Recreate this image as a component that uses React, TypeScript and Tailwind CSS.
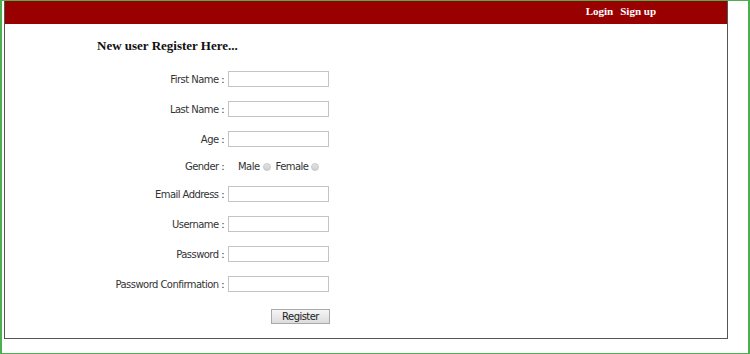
import React from "react";

const labelFont = "font-['DejaVu_Sans','Tahoma',sans-serif] tracking-[-0.55px]";

const Field = ({ label, type = "text" }: { label: string; type?: string }) => (
  <div className="flex h-[30px] items-center">
    <label className="w-[223px] pr-[4px] text-right text-[10px] text-[#333]">
      {label} :
    </label>
    <input
      type={type}
      className="h-[16px] w-[101px] border border-[#c4c4c4] bg-white outline-none"
    />
  </div>
);

const Radio = () => (
  <span className="ml-[3px] inline-block h-[8px] w-[8px] rounded-full border border-[#c8c8c8] bg-gradient-to-b from-[#e4e4e4] to-[#cfcfcf]" />
);

export default function App() {
  return (
    <main className="h-[354px] w-[750px] overflow-hidden border-y border-x-2 border-y-[#4caf50] border-x-[#4caf50] bg-white">
      <div className="ml-[2px] h-[338px] w-[724px] border-x border-b border-[#555]">
        <header className="flex h-[23px] items-start justify-end bg-[#990000] pr-[71px] pt-[2px] font-['Liberation_Serif',serif] text-[11px] font-bold text-white">
          <a className="mr-[7px]">Login</a>
          <a>Sign up</a>
        </header>

        <section className={`${labelFont} pt-[12px]`}>
          <h1 className="ml-[92px] h-[20px] font-['Liberation_Serif',serif] text-[13px] font-bold leading-[20px] tracking-normal text-[#111]">
            New user Register Here...
          </h1>

          <form className="mt-[8px]">
            <Field label="First Name" />
            <Field label="Last Name" />
            <Field label="Age" />

            <div className="flex h-[25px] items-center text-[10px] text-[#333]">
              <span className="w-[223px] pr-[4px] text-right">Gender :</span>
              <span className="ml-[10px] flex items-center">
                Male
                <Radio />
              </span>
              <span className="ml-[5px] flex items-center">
                Female
                <Radio />
              </span>
            </div>

            <Field label="Email Address" />
            <Field label="Username" />
            <Field label="Password" type="password" />
            <Field label="Password Confirmation" type="password" />

            <div className="mt-[10px] flex pl-[266px]">
              <button
                type="button"
                className="h-[15px] w-[59px] border border-[#a8a8a8] bg-gradient-to-b from-[#f6f6f6] to-[#dcdcdc] text-[10px] leading-[13px] text-[#222]"
              >
                Register
              </button>
            </div>
          </form>
        </section>
      </div>
    </main>
  );
}
